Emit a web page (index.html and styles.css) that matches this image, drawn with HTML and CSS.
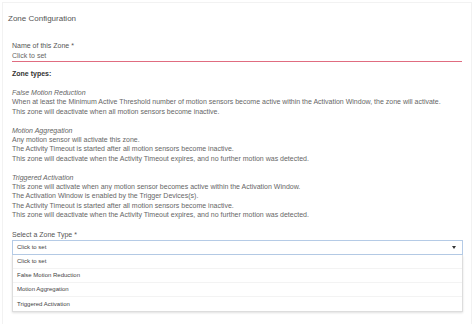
FILE: index.html
```html
<!DOCTYPE html>
<html>
<head>
<meta charset="utf-8">
<link rel="stylesheet" href="styles.css">
</head>
<body>
<div class="card">
  <div class="title">Zone Configuration</div>
  <div class="content">
    <div class="field">
      <div class="label">Name of this Zone *</div>
      <div class="value">Click to set</div>
    </div>
    <div class="types-head">Zone types:</div>
    <div class="type">
      <div class="type-name">False Motion Reduction</div>
      <div class="line">When at least the Minimum Active Threshold number of motion sensors become active within the Activation Window, the zone will activate.</div>
      <div class="line">This zone will deactivate when all motion sensors become inactive.</div>
    </div>
    <div class="type">
      <div class="type-name">Motion Aggregation</div>
      <div class="line">Any motion sensor will activate this zone.</div>
      <div class="line">The Activity Timeout is started after all motion sensors become inactive.</div>
      <div class="line">This zone will deactivate when the Activity Timeout expires, and no further motion was detected.</div>
    </div>
    <div class="type">
      <div class="type-name">Triggered Activation</div>
      <div class="line">This zone will activate when any motion sensor becomes active within the Activation Window.</div>
      <div class="line">The Activation Window is enabled by the Trigger Devices(s).</div>
      <div class="line">The Activity Timeout is started after all motion sensors become inactive.</div>
      <div class="line">This zone will deactivate when the Activity Timeout expires, and no further motion was detected.</div>
    </div>
    <div class="select-label">Select a Zone Type *</div>
    <div class="select-wrap">
      <div class="select">
        <span>Click to set</span>
        <span class="caret"></span>
      </div>
      <div class="dropdown">
        <div class="option">Click to set</div>
        <div class="option">False Motion Reduction</div>
        <div class="option">Motion Aggregation</div>
        <div class="option">Triggered Activation</div>
      </div>
    </div>
  </div>
</div>
</body>
</html>
```
FILE: styles.css
```css
html, body {
  margin: 0;
  padding: 0;
  background: #fff;
}
body {
  font-family: "Liberation Sans", Arial, sans-serif;
  color: #666;
  width: 474px;
  height: 324px;
  overflow: hidden;
}
.card {
  margin: 2px 2px 0 2px;
  border: 1px solid #f2f2f2;
  border-bottom: none;
  height: 330px;
  box-sizing: border-box;
}
.title {
  font-size: 8px;
  color: #555;
  padding: 11px 0 0 5px;
  line-height: 10px;
}
.content {
  padding: 17px 9px 0 9px;
}
.field {
  border-bottom: 1px solid #e06c80;
  padding-bottom: 1px;
}
.label {
  font-size: 7px;
  line-height: 9.5px;
  color: #555;
}
.value {
  font-size: 7px;
  line-height: 9.5px;
  color: #666;
}
.types-head {
  font-size: 7px;
  font-weight: bold;
  color: #333;
  line-height: 10px;
  margin-top: 6.7px;
}
.type {
  margin-top: 9.4px;
}
.type + .type {
  margin-top: 9.8px;
}
.type-name {
  font-style: italic;
  font-size: 7px;
  line-height: 9.3px;
  color: #666;
}
.line {
  font-size: 7px;
  line-height: 9.3px;
  color: #666;
}
.select-label {
  font-size: 7px;
  line-height: 10px;
  color: #555;
  margin-top: 10.5px;
}
.select-wrap {
  width: 451px;
}
.select {
  height: 15px;
  border: 1px solid #b5cbe6;
  box-sizing: border-box;
  display: flex;
  align-items: center;
  justify-content: space-between;
  padding: 0 6px 0 4px;
  font-size: 6px;
  color: #444;
}
.caret {
  width: 0;
  height: 0;
  border-left: 2.5px solid transparent;
  border-right: 2.5px solid transparent;
  border-top: 3px solid #333;
}
.dropdown {
  border: 1px solid #ddd;
  border-top: none;
  box-shadow: 0 1px 2px rgba(0,0,0,0.12);
}
.option {
  height: 14px;
  display: flex;
  align-items: center;
  padding-left: 4px;
  font-size: 6px;
  color: #444;
  border-bottom: 1px solid #f3f3f3;
  box-sizing: border-box;
}
.option:last-child {
  border-bottom: none;
}
```
